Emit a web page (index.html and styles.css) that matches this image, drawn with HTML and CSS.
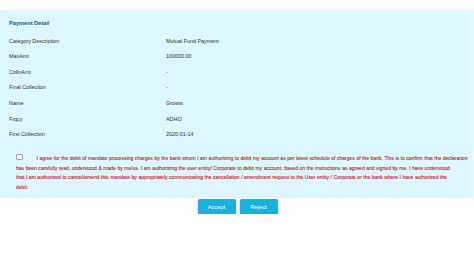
FILE: index.html
```html
<!DOCTYPE html>
<html>
<head>
<meta charset="utf-8">
<link rel="stylesheet" href="styles.css">
</head>
<body>
<div class="panel">
  <div class="title">Payment Detail</div>
  <div class="rows">
    <div class="label">Category Description</div><div class="value">Mutual Fund Payment</div>
    <div class="label">MaxAmt</div><div class="value">100000.00</div>
    <div class="label">CollnAmt</div><div class="value">-</div>
    <div class="label">Final Collection</div><div class="value">-</div>
    <div class="label">Name</div><div class="value">Groww</div>
    <div class="label">Frqcy</div><div class="value">ADHO</div>
    <div class="label">First Collection</div><div class="value">2020-01-14</div>
  </div>
  <p class="consent"><span class="box"></span>I agree for the debit of mandate processing charges by the bank whom I am authorizing to debit my account as per latest schedule of charges of the bank. This is to confirm that the declaration<br>has been carefully read, understood &amp; made by me/us. I am authorizing the user entity/ Corporate to debit my account, based on the instructions as agreed and signed by me. I have understood<br>that I am authorized to cancel/amend this mandate by appropriately communicating the cancellation / amendment request to the User entity / Corporate or the bank where I have authorized the<br>debit.</p>
</div>
<div class="actions">
  <button class="btn">Accept</button>
  <button class="btn">Reject</button>
</div>
</body>
</html>
```
FILE: styles.css
```css
html, body {
  margin: 0;
  padding: 0;
  background: #ffffff;
  font-family: "Liberation Sans", Arial, sans-serif;
}
.panel {
  margin: 10px 1px 0 0;
  background: #ddf7fe;
  padding: 8.7px 4px 9px 9px;
  height: 188px;
  box-sizing: border-box;
  box-shadow: 0 -1px 2px #eefbff;
}
.title {
  font-size: 5.8px;
  font-weight: bold;
  color: #1d5f8c;
  line-height: 8px;
  letter-spacing: -0.1px;
}
.rows {
  display: grid;
  grid-template-columns: 156px 1fr;
  grid-auto-rows: 15.6px;
  margin-top: 7px;
  font-size: 5.4px;
  color: #333;
  align-items: center;
}
.label, .value {
  line-height: 15.6px;
}
.value {
  padding-left: 1px;
}
.consent {
  margin: 11px 0 0 7px;
  font-size: 5.05px;
  line-height: 9.8px;
  color: #c0252b;
  -webkit-text-stroke: 0.1px #c0252b;
  word-spacing: 0.1px;
}
.box {
  display: inline-block;
  width: 4.5px;
  height: 4.5px;
  border: 0.6px solid #9aa;
  background: #f4f4f4;
  border-radius: 1px;
  vertical-align: -0.5px;
  margin-right: 14px;
}
.actions {
  display: flex;
  justify-content: center;
  gap: 4px;
  margin-top: 1px;
  padding-left: 1px;
}
.btn {
  width: 38px;
  height: 15px;
  border: none;
  border-radius: 2px;
  background: #19b0da;
  color: #fff;
  font-family: "Liberation Sans", Arial, sans-serif;
  font-size: 5.8px;
  padding: 0;
  box-shadow: 0 1.5px 1.5px rgba(0, 40, 60, 0.55);
}
```
